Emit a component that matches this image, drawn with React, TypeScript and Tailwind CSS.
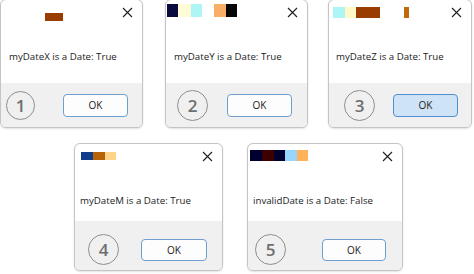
import React from 'react';

type Swatch = { color: string; w: number };

interface DialogProps {
    boxClass: string;
    swatches: Swatch[];
    swatchClass: string;
    text: string;
    textClass: string;
    footerClass: string;
    circleClass: string;
    num: number;
    okClass: string;
    pressed?: boolean;
}

const CloseIcon = () => (
    <svg width="11" height="11" viewBox="0 0 11 11" className="block">
        <path d="M1 1 L10 10 M10 1 L1 10" stroke="#1f1f1f" strokeWidth="1.1" fill="none" />
    </svg>
);

const Dialog: React.FC<DialogProps> = ({
    boxClass,
    swatches,
    swatchClass,
    text,
    textClass,
    footerClass,
    circleClass,
    num,
    okClass,
    pressed,
}) => (
    <div className={`flex flex-col shrink-0 bg-white border border-[#c4c4c4] rounded-[6px] overflow-hidden shadow-[0_1px_2px_rgba(0,0,0,0.12)] ${boxClass}`}>
        <div className="relative flex-1">
            <div className={`flex ${swatchClass}`}>
                {swatches.map((s, i) => (
                    <div key={i} className="h-full" style={{ width: s.w, backgroundColor: s.color }} />
                ))}
            </div>
            <div className="absolute right-[9px] top-[7px]">
                <CloseIcon />
            </div>
            <p className={`text-[9.7px] text-[#1b1b1b] leading-none whitespace-nowrap ${textClass}`}>{text}</p>
        </div>
        <div className={`flex items-center bg-[#f0f0f0] ${footerClass}`}>
            <div
                className={`flex items-center justify-center rounded-full border-[1.5px] border-[#8e8e8e] text-[#6e6e6e] font-semibold text-[17px] leading-none ${circleClass}`}
            >
                {num}
            </div>
            <button
                className={`ml-auto flex items-center justify-center rounded-[4px] border text-[10px] text-[#1b1b1b] leading-none ${
                    pressed ? 'bg-[#cfe3f6] border-[#4f8fcf]' : 'bg-[#fdfdfd] border-[#6f9fcf]'
                } ${okClass}`}
            >
                OK
            </button>
        </div>
    </div>
);

export default function App() {
    return (
        <div
            className="w-[474px] h-[274px] bg-white overflow-hidden"
            style={{ fontFamily: '"Open Sans", "Noto Sans", sans-serif' }}
        >
            <div className="flex -mt-px">
                <Dialog
                    boxClass="w-[143px] h-[129px]"
                    swatches={[{ color: '#9a3d00', w: 18 }]}
                    swatchClass="pl-[44px] pt-[13px] h-[21px]"
                    text="myDateX is a Date: True"
                    textClass="pl-[8px] pt-[31px]"
                    footerClass="h-[44px]"
                    circleClass="w-[29px] h-[29px] ml-[5px]"
                    num={1}
                    okClass="w-[65px] h-[23px] mr-[14px]"
                />
                <Dialog
                    boxClass="w-[143px] h-[129px] ml-[22px]"
                    swatches={[
                        { color: '#0a0a3c', w: 11 },
                        { color: '#fffbd6', w: 13 },
                        { color: '#aef5f5', w: 11 },
                        { color: '#ffffff', w: 12 },
                        { color: '#f9ae66', w: 12 },
                        { color: '#050505', w: 11 },
                    ]}
                    swatchClass="pl-[1px] pt-[4px] h-[17px]"
                    text="myDateY is a Date: True"
                    textClass="pl-[8px] pt-[35px]"
                    footerClass="h-[44px]"
                    circleClass="w-[31px] h-[31px] ml-[11px]"
                    num={2}
                    okClass="w-[65px] h-[23px] mr-[15px]"
                />
                <Dialog
                    boxClass="w-[144px] h-[129px] ml-[20px]"
                    swatches={[
                        { color: '#aef5f5', w: 12 },
                        { color: '#fff9c8', w: 11 },
                        { color: '#993c00', w: 24 },
                        { color: '#ffffff', w: 24 },
                        { color: '#c16a0b', w: 5 },
                    ]}
                    swatchClass="pl-[4px] pt-[7px] h-[18px]"
                    text="myDateZ is a Date: True"
                    textClass="pl-[7px] pt-[34px]"
                    footerClass="h-[44px]"
                    circleClass="w-[31px] h-[31px] ml-[15px]"
                    num={3}
                    okClass="w-[65px] h-[23px] mr-[13px]"
                    pressed
                />
            </div>
            <div className="flex mt-[15px] pl-[74px]">
                <Dialog
                    boxClass="w-[149px] h-[128px]"
                    swatches={[
                        { color: '#0f3d8c', w: 12 },
                        { color: '#b8620a', w: 12 },
                        { color: '#fdd48a', w: 11 },
                    ]}
                    swatchClass="pl-[6px] pt-[8px] h-[16px]"
                    text="myDateM is a Date: True"
                    textClass="pl-[5px] pt-[36px]"
                    footerClass="h-[49px] pt-[8px]"
                    circleClass="w-[31px] h-[31px] ml-[13px]"
                    num={4}
                    okClass="w-[66px] h-[22px] mr-[15px]"
                />
                <Dialog
                    boxClass="w-[156px] h-[128px] ml-[24px]"
                    swatches={[
                        { color: '#000030', w: 12 },
                        { color: '#3c0000', w: 12 },
                        { color: '#000030', w: 11 },
                        { color: '#99d5ff', w: 12 },
                        { color: '#ffb25a', w: 11 },
                    ]}
                    swatchClass="pl-[2px] pt-[6px] h-[17px]"
                    text="invalidDate is a Date: False"
                    textClass="pl-[5px] pt-[35px]"
                    footerClass="h-[49px] pt-[8px]"
                    circleClass="w-[31px] h-[31px] ml-[7px]"
                    num={5}
                    okClass="w-[64px] h-[22px] mr-[16px]"
                />
            </div>
        </div>
    );
}
